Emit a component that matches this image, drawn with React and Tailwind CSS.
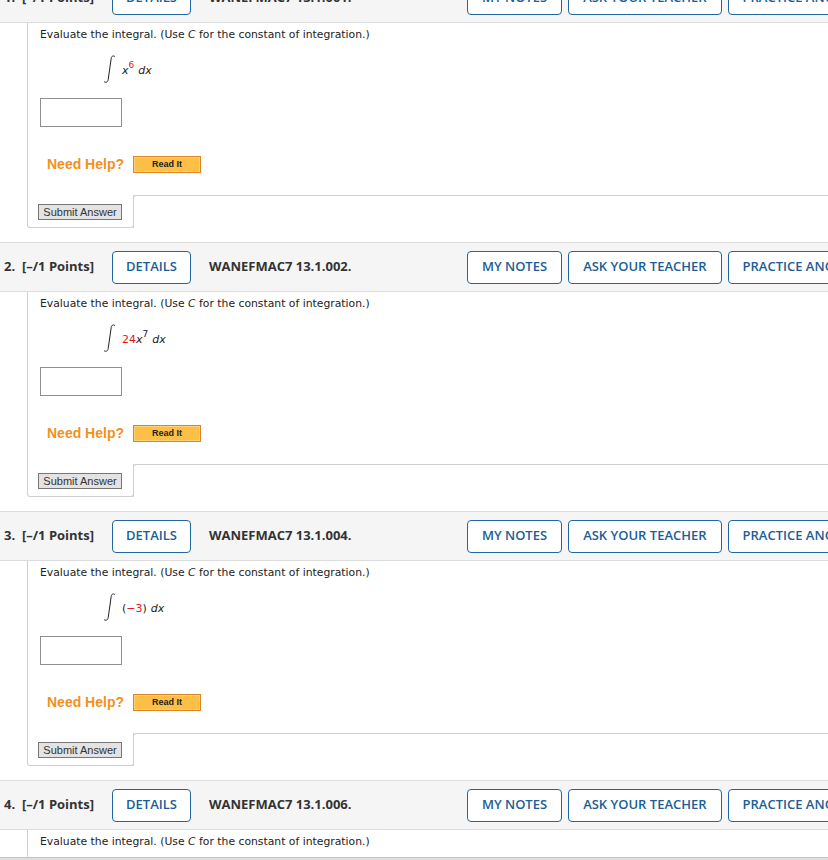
import React from 'react'

const QUESTIONS = [
  { num: 1, code: 'WANEFMAC7 13.1.001.', expr: 'x6' },
  { num: 2, code: 'WANEFMAC7 13.1.002.', expr: '24x7' },
  { num: 3, code: 'WANEFMAC7 13.1.004.', expr: 'neg3' },
  { num: 4, code: 'WANEFMAC7 13.1.006.', expr: 'x6' },
]

const sans = "font-['Open_Sans',sans-serif]"

function OutlineButton({ children, className = 'px-[14px]' }) {
  return (
    <button
      type="button"
      className={`h-[33px] shrink-0 whitespace-nowrap rounded-[4px] border border-[#2067a0] bg-white text-[13px] font-semibold text-[#1b5e96] ${sans} ${className}`}
    >
      {children}
    </button>
  )
}

function IntegralSign() {
  return (
    <svg width="13" height="28" viewBox="0 0 13 28" className="shrink-0">
      <path
        d="M12 1.8 C10.8 0.4 8.6 0.6 8.2 3.5 L5.2 24.5 C4.8 27.4 2.6 27.8 1 26.6"
        fill="none"
        stroke="#222"
        strokeWidth="1"
      />
    </svg>
  )
}

function Expr({ kind }) {
  const it = "italic font-['DejaVu_Sans',sans-serif]"
  const sup = 'relative -top-[6px] align-baseline text-[9px]'
  if (kind === '24x7') {
    return (
      <span className="pt-[4px] text-[11px] text-[#222]">
        <span className="text-[#e8141b]">24</span>
        <span className={it}>x</span>
        <span className={sup}>7</span>
        <span className={`${it} ml-[4px]`}>dx</span>
      </span>
    )
  }
  if (kind === 'neg3') {
    return (
      <span className="pt-[4px] text-[11px] text-[#222]">
        (<span className="text-[#e8141b]">−3</span>)
        <span className={`${it} ml-[4px]`}>dx</span>
      </span>
    )
  }
  return (
    <span className="pt-[4px] text-[11px] text-[#222]">
      <span className={it}>x</span>
      <span className={`${sup} text-[#e8141b]`}>6</span>
      <span className={`${it} ml-[4px]`}>dx</span>
    </span>
  )
}

function Question({ q }) {
  return (
    <section className="mb-[14px]">
      <div className="flex h-[50px] items-center border-y border-[#dcdcdc] bg-[#f5f5f5] pl-[4px]">
        <span className={`w-[108px] whitespace-pre text-[13px] font-bold text-[#333] ${sans}`}>
          {q.num}.  [–/1 Points]
        </span>
        <OutlineButton className="px-[13px]">DETAILS</OutlineButton>
        <span className={`ml-[18px] w-[258px] text-[13px] font-bold text-[#333] ${sans}`}>
          {q.code}
        </span>
        <div className="flex gap-[6px]">
          <OutlineButton>MY NOTES</OutlineButton>
          <OutlineButton>ASK YOUR TEACHER</OutlineButton>
          <OutlineButton>PRACTICE ANOTHER</OutlineButton>
        </div>
      </div>

      <div className="ml-[27px] border-l border-[#cfcfcf] pl-[12px] pt-[5px] pb-[22px] font-['DejaVu_Sans',sans-serif]">
        <p className="h-[14px] text-[10.8px] leading-[14px] text-[#222]">
          Evaluate the integral. (Use <i>C</i> for the constant of integration.)
        </p>
        <div className="ml-[63px] mt-[13px] flex h-[28px] items-center gap-[6px]">
          <IntegralSign />
          <Expr kind={q.expr} />
        </div>
        <div className="mt-[15px] h-[29px] w-[82px] border border-[#8e8e8e] bg-white" />
        <div className="mt-[29px] flex h-[17px] items-center">
          <span className="ml-[7px] font-['Liberation_Sans',sans-serif] text-[14px] font-bold text-[#f3901d]">
            Need Help?
          </span>
          <button
            type="button"
            className="ml-[9px] flex h-[17px] w-[68px] items-center justify-center border border-[#dc8526] bg-[#fdbf46] font-['Liberation_Sans',sans-serif] text-[9px] font-bold text-[#222] shadow-[inset_0_0_0_1px_#fdd27a]"
          >
            Read It
          </button>
        </div>
      </div>

      <div className="flex">
        <div className="ml-[27px] h-[33px] w-[107px] shrink-0 rounded-b-[3px] border-x border-b border-[#cfcfcf] pl-[10px] pt-[9px]">
          <button
            type="button"
            className="flex h-[16px] w-[84px] items-center justify-center border border-[#777] bg-[#e3e3e3] font-['Liberation_Sans',sans-serif] text-[11px] text-[#333]"
          >
            Submit Answer
          </button>
        </div>
        <div className="-ml-px flex-1 rounded-tl-[3px] border-t border-l border-[#cfcfcf]" />
      </div>
    </section>
  )
}

export default function App() {
  return (
    <div className="flex h-[860px] w-[828px] flex-col overflow-hidden bg-white">
      <div className="flex-1 overflow-hidden">
        <div className="-mt-[27px] w-[980px]">
          {QUESTIONS.map((q) => (
            <Question key={q.num} q={q} />
          ))}
        </div>
      </div>
      <div className="h-[3px] border-t border-[#c4c4c4] bg-[#dedede]" />
    </div>
  )
}
